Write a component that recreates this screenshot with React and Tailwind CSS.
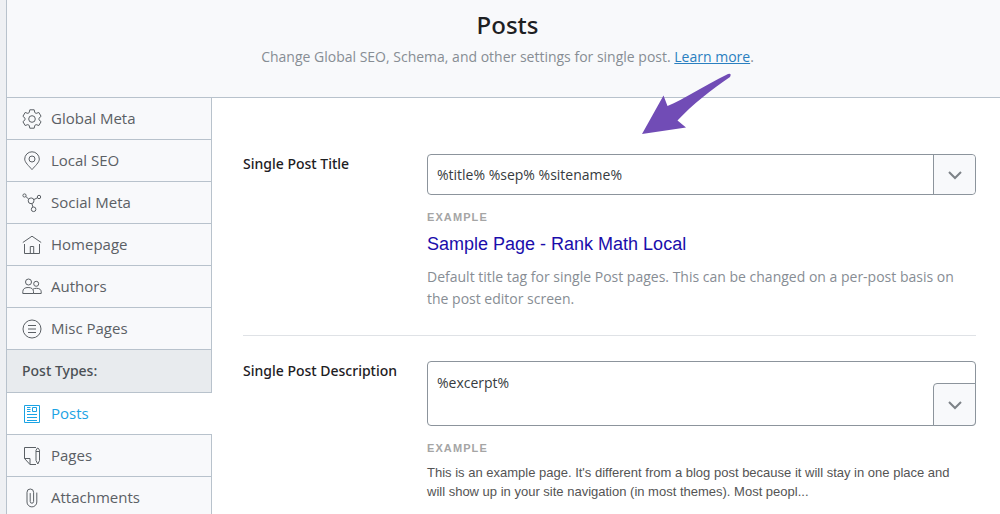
import { useState } from "react";
import clsx from "clsx";

const settingsItems = [
    { id: "global", label: "Global Meta", icon: GearIcon },
    { id: "local", label: "Local SEO", icon: PinIcon },
    { id: "social", label: "Social Meta", icon: SocialIcon },
    { id: "homepage", label: "Homepage", icon: HomeIcon },
    { id: "authors", label: "Authors", icon: AuthorsIcon },
    { id: "misc", label: "Misc Pages", icon: MiscIcon },
];

const postTypeItems = [
    { id: "posts", label: "Posts", icon: PostsIcon },
    { id: "pages", label: "Pages", icon: PagesIcon },
    { id: "attachments", label: "Attachments", icon: ClipIcon },
];

function Icon({ children }) {
    return (
        <svg
            viewBox="0 0 20 20"
            fill="none"
            stroke="currentColor"
            strokeLinejoin="round"
            className="h-5 w-5 shrink-0"
            aria-hidden="true"
        >
            {children}
        </svg>
    );
}

function GearIcon() {
    return (
        <Icon>
            <path d="M7.2 3.6 7.8.8h4.4l.6 2.8 1.34.78 2.73-.89 2.2 3.81-2.13 1.92v1.56l2.13 1.92-2.2 3.81-2.73-.89-1.34.78-.6 2.8H7.8l-.6-2.8-1.34-.78-2.73.89-2.2-3.81 2.13-1.92V9.22L.93 7.3l2.2-3.81 2.73.89z" />
            <circle cx="10" cy="10" r="3.3" />
        </Icon>
    );
}

function PinIcon() {
    return (
        <Icon>
            <path d="M10 18.6C7 15 2.7 11.4 2.7 8.1a7.3 7.3 0 0 1 14.6 0c0 3.3-4.3 6.9-7.3 10.5z" />
            <circle cx="10" cy="8" r="3" />
        </Icon>
    );
}

function SocialIcon() {
    return (
        <Icon>
            <circle cx="2.5" cy="2.5" r="1.6" />
            <circle cx="17" cy="4" r="1.7" />
            <circle cx="11.6" cy="16.3" r="2.3" />
            <circle cx="9.1" cy="7.8" r="2.9" />
            <path d="m3.8 3.5 2.9 2.6M15.4 4.8l-3.6 1.8M9.9 10.7l1 3.300" />
        </Icon>
    );
}

function HomeIcon() {
    return (
        <Icon>
            <path d="M.8 7.5 10 1.2l9.200 6.300M2.500 9v9.500h15V9M8.300 18.500v-7h3.400v7" />
        </Icon>
    );
}

function AuthorsIcon() {
    return (
        <Icon>
            <circle cx="6.5" cy="5" r="3" />
            <circle cx="14.2" cy="6.8" r="2.5" />
            <path d="M.8 16.5v-1.8c0-2.8 2-4.2 5.3-4.2s5.4 1.4 5.4 4.2v1.8zM11.5 16.5h7.7v-1.7c0-2.2-1.7-3.500-4.700-3.500-1.500 0-2.700.3-3.500.9" />
        </Icon>
    );
}

function MiscIcon() {
    return (
        <Icon>
            <circle cx="10" cy="10" r="9" />
            <path d="M6 6.5h8M6 10h8M6 13.5h8" />
        </Icon>
    );
}

function PostsIcon() {
    return (
        <Icon>
            <path d="M2.5 1.5h15v17h-15zM10.500 3.500h4v4h-4zM5 3.500h3.500M5 5.500h3.500M5 7.500h3.500M5 10.500h10M5 13.500h10M5 16.500h10" />
        </Icon>
    );
}

function PagesIcon() {
    return (
        <Icon>
            <path d="M14 1.5H2.5v11l5.500 6h6M2.500 12.500H8v6M14 4.200 15.500 2h.5l1.500 2.200v10.300L15.800 18 14 14.500zM14 5.500h3.500" />
        </Icon>
    );
}

function ClipIcon() {
    return (
        <Icon>
            <path
                strokeLinecap="round"
                d="M14.8 5v9a4.900 4.900 0 0 1-9.800 0V4.300a3.300 3.300 0 0 1 6.600 0V13.500a1.700 1.700 0 0 1-3.400 0V5.500"
            />
        </Icon>
    );
}

function NavList({ items, active, onSelect }) {
    return (
        <ul className="divide-y divide-[#b8c2cc]">
            {items.map((item) => {
                const ItemIcon = item.icon;
                return (
                    <li key={item.id}>
                        <button
                            type="button"
                            onClick={() => onSelect(item.id)}
                            className={clsx(
                                "flex h-[41px] w-full items-center gap-[9px] border-r pl-[15px] text-left text-[15px]",
                                active === item.id
                                    ? "border-white bg-white text-[#1ba3e4]"
                                    : "border-[#b8c2cc] text-[#5b6065]"
                            )}
                        >
                            <ItemIcon />
                            {item.label}
                        </button>
                    </li>
                );
            })}
        </ul>
    );
}

function Chevron() {
    return (
        <svg viewBox="0 0 16 16" fill="none" stroke="currentColor" strokeWidth="2" className="h-4 w-4" aria-hidden="true">
            <path d="m2 5 6 6 6-6" />
        </svg>
    );
}

function Field({ id, label, children }) {
    return (
        <div className="flex">
            <label
                htmlFor={id}
                className="w-46 shrink-0 font-['Noto_Sans',sans-serif] text-sm leading-5 font-medium text-[#1d2023]"
            >
                {label}
            </label>
            <div className="min-w-0 flex-1">{children}</div>
        </div>
    );
}

function ExampleTag() {
    return (
        <p className="font-['Liberation_Sans',sans-serif] text-[11px] leading-4 font-bold tracking-widest text-[#a5a5a5]">
            EXAMPLE
        </p>
    );
}

export default function App() {
    const [active, setActive] = useState("posts");
    const [title, setTitle] = useState("%title% %sep% %sitename%");
    const [description, setDescription] = useState("%excerpt%");

    return (
        <div className="h-screen overflow-hidden bg-[#eef0f3] pl-[6px] font-['Open_Sans','Noto_Sans',sans-serif]">
            <div className="min-h-full border-l border-[#b8c2cc] bg-white">
                <header className="border-b border-[#b8c2cc] bg-[#f8f9fb] pt-[7px] pb-7 pl-2 text-center">
                    <h1 className="font-['Noto_Sans',sans-serif] text-2xl leading-9 font-medium text-[#1d2023]">
                        Posts
                    </h1>
                    <p className="pt-[2px] text-sm leading-6 text-[#878d94]">
                        Change Global SEO, Schema, and other settings for single post.{" "}
                        <a href="#learn" className="text-[#2a7fc0] underline">
                            Learn more
                        </a>
                        .
                    </p>
                </header>

                <div className="relative flex">
                    <nav className="w-[205px] shrink-0 bg-[#f8f9fb]">
                        <NavList items={settingsItems} active={active} onSelect={setActive} />
                        <h2 className="flex h-11 items-center border-y border-r border-[#b8c2cc] bg-[#e8ebee] pl-[15px] font-['Noto_Sans',sans-serif] text-sm font-medium text-[#4b5055]">
                            Post Types:
                        </h2>
                        <NavList items={postTypeItems} active={active} onSelect={setActive} />
                    </nav>

                    <main className="min-w-0 flex-1 pt-14 pr-6 pl-[31px]">
                        <Field id="post-title" label="Single Post Title">
                            <div className="flex h-[41px] rounded border border-[#8c949c]">
                                <input
                                    id="post-title"
                                    type="text"
                                    value={title}
                                    onChange={(e) => setTitle(e.target.value)}
                                    className="min-w-0 flex-1 rounded-l px-[9px] text-sm text-[#363b40] outline-none"
                                />
                                <button
                                    type="button"
                                    aria-label="Insert title variable"
                                    className="flex w-[42px] items-center justify-center rounded-r border-l border-[#8c949c] bg-[#f8f9fb] text-[#7d8287]"
                                >
                                    <Chevron />
                                </button>
                            </div>
                            <div className="pt-[14px]">
                                <ExampleTag />
                                <p className="pt-[7px] font-['Liberation_Sans',sans-serif] text-lg leading-6 text-[#1a0dab]">
                                    Sample Page - Rank Math Local
                                </p>
                                <p className="pt-[10px] text-sm leading-[22px] text-[#878d94]">
                                    Default title tag for single Post pages. This can be changed on a per-post basis on
                                    the post editor screen.
                                </p>
                            </div>
                        </Field>

                        <hr className="my-[25px] border-[#dfe2e6]" />

                        <Field id="post-description" label="Single Post Description">
                            <div className="relative flex">
                                <textarea
                                    id="post-description"
                                    value={description}
                                    onChange={(e) => setDescription(e.target.value)}
                                    className="h-[65px] w-full resize-none rounded border border-[#8c949c] py-[10px] pr-12 pl-[9px] text-sm leading-[22px] text-[#363b40] outline-none"
                                />
                                <button
                                    type="button"
                                    aria-label="Insert description variable"
                                    className="absolute right-0 bottom-0 flex h-[43px] w-[43px] items-center justify-center rounded-tl rounded-br border border-[#8c949c] bg-[#f8f9fb] text-[#7d8287]"
                                >
                                    <Chevron />
                                </button>
                            </div>
                            <div className="pt-[14px]">
                                <ExampleTag />
                                <p className="pt-[7px] pr-2 font-['Liberation_Sans',sans-serif] text-[13px] leading-[19px] text-[#545454]">
                                    This is an example page. It's different from a blog post because it will stay in one
                                    place and will show up in your site navigation (in most themes). Most peopl...
                                </p>
                            </div>
                        </Field>
                    </main>

                    <svg
                        viewBox="0 0 90 62"
                        className="absolute -top-[26px] left-[635px] h-[62px] w-[90px] fill-[#714cb6]"
                        aria-hidden="true"
                    >
                        <path d="M0 62 21.5 23.5 25.5 34C42 27 60 15 86 2q4-1 2 3C70 17 50 33 35.5 48.5L44 55.5z" />
                    </svg>
                </div>
            </div>
        </div>
    );
}
